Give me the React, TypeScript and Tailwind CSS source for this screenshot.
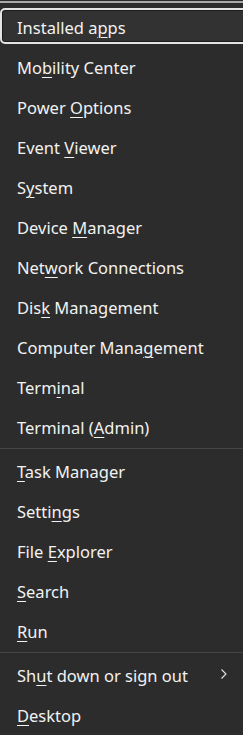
import React from "react";

type Item = { pre: string; key: string; post: string; sub?: boolean };

const groups: Item[][] = [
  [
    { pre: "Installed a", key: "p", post: "ps" },
    { pre: "Mo", key: "b", post: "ility Center" },
    { pre: "Power ", key: "O", post: "ptions" },
    { pre: "Event ", key: "V", post: "iewer" },
    { pre: "S", key: "y", post: "stem" },
    { pre: "Device ", key: "M", post: "anager" },
    { pre: "Net", key: "w", post: "ork Connections" },
    { pre: "Dis", key: "k", post: " Management" },
    { pre: "Computer Mana", key: "g", post: "ement" },
    { pre: "Term", key: "i", post: "nal" },
    { pre: "Terminal (", key: "A", post: "dmin)" },
  ],
  [
    { pre: "", key: "T", post: "ask Manager" },
    { pre: "Setti", key: "n", post: "gs" },
    { pre: "File ", key: "E", post: "xplorer" },
    { pre: "", key: "S", post: "earch" },
    { pre: "", key: "R", post: "un" },
  ],
  [
    { pre: "Sh", key: "u", post: "t down or sign out", sub: true },
    { pre: "", key: "D", post: "esktop" },
  ],
];

function MenuItem({ item, focused }: { item: Item; focused?: boolean }) {
  return (
    <div
      className={
        "flex h-9 items-center rounded-[5px] border-2 pt-[5px] pl-[15px] pr-[15px] " +
        (focused
          ? "-mr-3 border-[#e4e4e4] bg-[#323232] shadow-[inset_0_0_0_1px_#1c1c1c]"
          : "border-transparent")
      }
    >
      <span className="flex-1 whitespace-nowrap">
        {item.pre}
        <span className="underline decoration-1 underline-offset-[3px]">{item.key}</span>
        {item.post}
      </span>
      {item.sub && (
        <svg width="8" height="12" viewBox="0 0 8 12" className="-mr-[2px] -mt-[5px]">
          <path d="M1.5 1.5 L6 6 L1.5 10.5" fill="none" stroke="#e6e6e6" strokeWidth="1.1" />
        </svg>
      )}
    </div>
  );
}

export default function App() {
  return (
    <div
      className="h-[735px] w-[243px] overflow-hidden bg-[#2c2c2c] text-[16.5px] text-[#f2f2f2]"
      style={{ fontFamily: '"Segoe UI", "Noto Sans", sans-serif' }}
    >
      <div className="mt-[1px] h-[2px] bg-[#a9a9a9]" />
      <div className="flex flex-col gap-1 pt-[5px]">
        {groups.map((group, gi) => (
          <React.Fragment key={gi}>
            {gi > 0 && <div className="-mb-px h-px bg-[#464646]" />}
            {group.map((item, i) => (
              <MenuItem key={item.pre + item.key} item={item} focused={gi === 0 && i === 0} />
            ))}
          </React.Fragment>
        ))}
      </div>
    </div>
  );
}
